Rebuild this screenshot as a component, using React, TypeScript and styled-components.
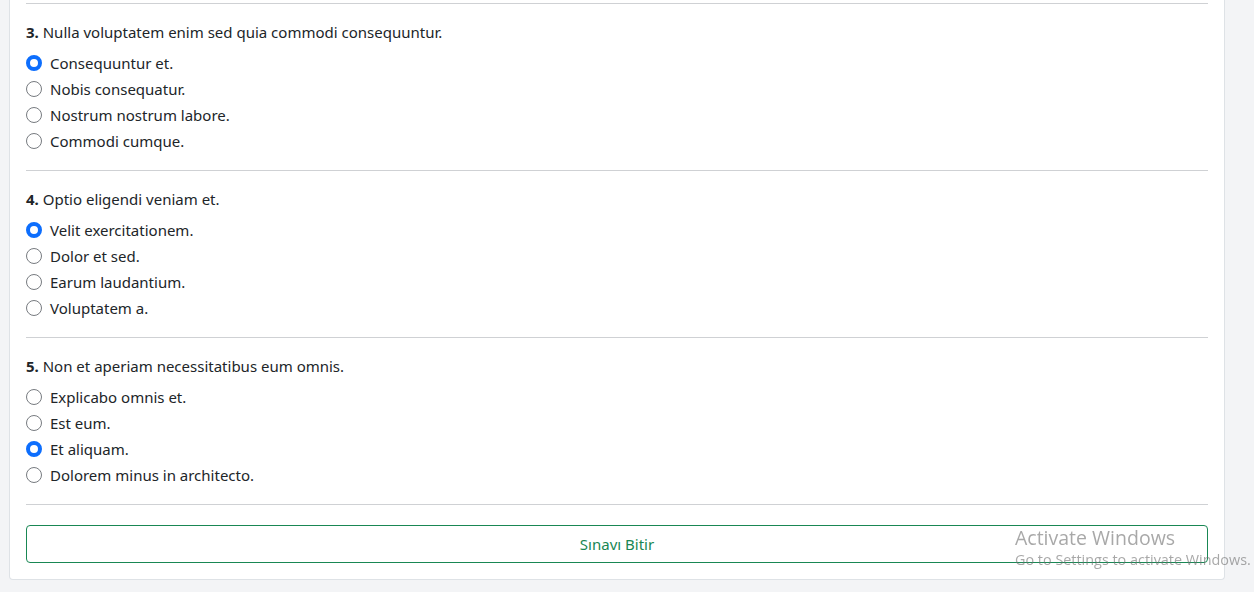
import React from 'react';
import styled, { createGlobalStyle } from 'styled-components';

const GlobalStyle = createGlobalStyle`
  html, body {
    margin: 0;
    padding: 0;
    background: #f3f4f6;
  }
  body {
    font-family: 'Noto Sans', 'Open Sans', sans-serif;
    color: #212529;
  }
`;

const Page = styled.div`
  padding: 0 29px 12px 9px;
`;

const Card = styled.div`
  background: #fff;
  border: 1px solid #dee2e6;
  border-top: none;
  border-radius: 0 0 4px 4px;
  padding: 3px 16px 16px 16px;
`;

const Divider = styled.hr`
  margin: 0;
  border: none;
  border-top: 1px solid #cfd1d4;
`;

const Question = styled.div`
  padding: 17px 0 16px 0;
`;

const Title = styled.div`
  font-size: 15px;
  line-height: 22px;
  margin-bottom: 7px;

  b {
    font-weight: 700;
  }
`;

const Option = styled.label`
  display: flex;
  align-items: center;
  gap: 8px;
  height: 26px;
  font-size: 15px;
`;

const Radio = styled.input.attrs({ type: 'radio' })`
  appearance: none;
  margin: 0;
  width: 16px;
  height: 16px;
  border-radius: 50%;
  border: 1px solid #777b80;
  background: #fff;
  flex-shrink: 0;

  &:checked {
    border: 4.5px solid #0d6efd;
  }
`;

const FinishButton = styled.button`
  display: block;
  width: 100%;
  height: 38px;
  margin-top: 20px;
  background: #fff;
  border: 1px solid #198754;
  border-radius: 4px;
  color: #198754;
  font-family: inherit;
  font-size: 15px;
`;

const Watermark = styled.div`
  position: fixed;
  left: 1015px;
  top: 526px;
  color: rgba(110, 110, 110, 0.6);
  font-family: 'Open Sans', 'Noto Sans', sans-serif;
  pointer-events: none;
`;

const WmTitle = styled.div`
  font-size: 19.5px;
  line-height: 24px;
`;

const WmSub = styled.div`
  font-size: 14.4px;
  line-height: 20px;
`;

interface Q {
  n: number;
  text: string;
  options: string[];
  picked: number;
}

const questions: Q[] = [
  {
    n: 3,
    text: 'Nulla voluptatem enim sed quia commodi consequuntur.',
    options: ['Consequuntur et.', 'Nobis consequatur.', 'Nostrum nostrum labore.', 'Commodi cumque.'],
    picked: 0,
  },
  {
    n: 4,
    text: 'Optio eligendi veniam et.',
    options: ['Velit exercitationem.', 'Dolor et sed.', 'Earum laudantium.', 'Voluptatem a.'],
    picked: 0,
  },
  {
    n: 5,
    text: 'Non et aperiam necessitatibus eum omnis.',
    options: ['Explicabo omnis et.', 'Est eum.', 'Et aliquam.', 'Dolorem minus in architecto.'],
    picked: 2,
  },
];

export default function App() {
  return (
    <>
      <GlobalStyle />
      <Page>
        <Card>
          {questions.map((q) => (
            <React.Fragment key={q.n}>
              <Divider />
              <Question>
                <Title>
                  <b>{q.n}.</b> {q.text}
                </Title>
                {q.options.map((o, i) => (
                  <Option key={o}>
                    <Radio name={`q${q.n}`} defaultChecked={i === q.picked} />
                    {o}
                  </Option>
                ))}
              </Question>
            </React.Fragment>
          ))}
          <Divider />
          <FinishButton>Sınavı Bitir</FinishButton>
        </Card>
      </Page>
      <Watermark>
        <WmTitle>Activate Windows</WmTitle>
        <WmSub>Go to Settings to activate Windows.</WmSub>
      </Watermark>
    </>
  );
}
